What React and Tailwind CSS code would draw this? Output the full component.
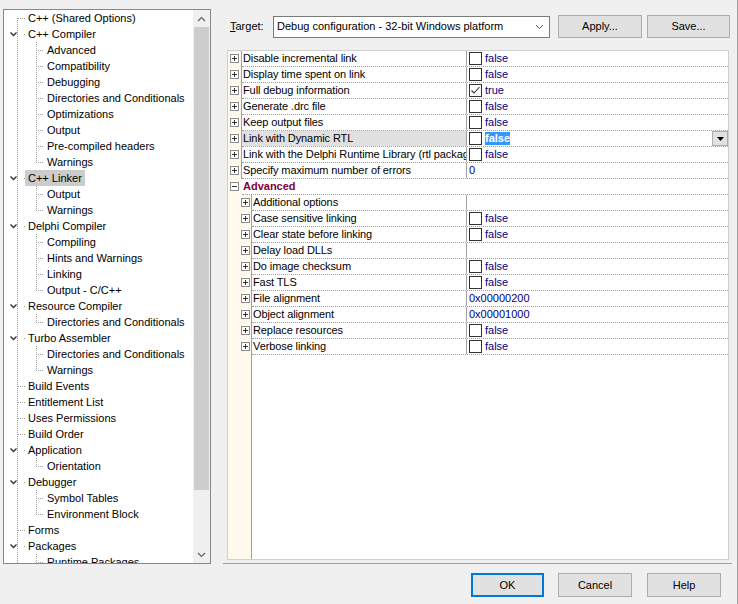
const TREE = [
  [0, "C++ (Shared Options)", "first"],
  [0, "C++ Compiler", "open"],
  [1, "Advanced", "mid"],
  [1, "Compatibility", "mid"],
  [1, "Debugging", "mid"],
  [1, "Directories and Conditionals", "mid"],
  [1, "Optimizations", "mid"],
  [1, "Output", "mid"],
  [1, "Pre-compiled headers", "mid"],
  [1, "Warnings", "last"],
  [0, "C++ Linker", "open", true],
  [1, "Output", "mid"],
  [1, "Warnings", "last"],
  [0, "Delphi Compiler", "open"],
  [1, "Compiling", "mid"],
  [1, "Hints and Warnings", "mid"],
  [1, "Linking", "mid"],
  [1, "Output - C/C++", "last"],
  [0, "Resource Compiler", "open"],
  [1, "Directories and Conditionals", "last"],
  [0, "Turbo Assembler", "open"],
  [1, "Directories and Conditionals", "mid"],
  [1, "Warnings", "last"],
  [0, "Build Events", "leaf"],
  [0, "Entitlement List", "leaf"],
  [0, "Uses Permissions", "leaf"],
  [0, "Build Order", "leaf"],
  [0, "Application", "open"],
  [1, "Orientation", "last"],
  [0, "Debugger", "open"],
  [1, "Symbol Tables", "mid"],
  [1, "Environment Block", "last"],
  [0, "Forms", "leaf"],
  [0, "Packages", "open"],
  [1, "Runtime Packages", "mid"],
];

const ROWS = [
  { name: "Disable incremental link", check: false, text: "false" },
  { name: "Display time spent on link", check: false, text: "false" },
  { name: "Full debug information", check: true, text: "true" },
  { name: "Generate .drc file", check: false, text: "false" },
  { name: "Keep output files", check: false, text: "false" },
  { name: "Link with Dynamic RTL", check: false, text: "false", selected: true },
  { name: "Link with the Delphi Runtime Library (rtl packages)", check: false, text: "false" },
  { name: "Specify maximum number of errors", text: "0" },
  { category: "Advanced" },
  { name: "Additional options", nested: true },
  { name: "Case sensitive linking", check: false, text: "false", nested: true },
  { name: "Clear state before linking", check: false, text: "false", nested: true },
  { name: "Delay load DLLs", nested: true },
  { name: "Do image checksum", check: false, text: "false", nested: true },
  { name: "Fast TLS", check: false, text: "false", nested: true },
  { name: "File alignment", text: "0x00000200", nested: true },
  { name: "Object alignment", text: "0x00001000", nested: true },
  { name: "Replace resources", check: false, text: "false", nested: true },
  { name: "Verbose linking", check: false, text: "false", nested: true },
];

const DOT = "#a0a0a0";

const Guides = ({ level, kind }) => {
  const w = level === 0 ? 21 : 40;
  return (
    <svg width={w} height="16" viewBox={`0 0 ${w} 16`} shapeRendering="crispEdges" className="shrink-0">
      <line x1="13.5" y1={kind === "first" ? 8 : 0} x2="13.5" y2="16" stroke={DOT} strokeDasharray="1 1" />
      {level === 0 && kind !== "open" && (
        <line x1="14" y1="8.5" x2="21" y2="8.5" stroke={DOT} strokeDasharray="1 1" />
      )}
      {level === 0 && kind === "open" && (
        <>
          <rect x="20" y="8" width="1" height="1" fill={DOT} />
          <path d="M6.5 6.5L9.5 9.5L12.5 6.5" fill="none" stroke="#333" strokeWidth="1.4" shapeRendering="auto" />
        </>
      )}
      {level === 1 && (
        <>
          <line x1="32.5" y1="0" x2="32.5" y2={kind === "last" ? 9 : 16} stroke={DOT} strokeDasharray="1 1" />
          <line x1="34" y1="8.5" x2="40" y2="8.5" stroke={DOT} strokeDasharray="1 1" />
        </>
      )}
    </svg>
  );
};

const Chevron = ({ up }) => (
  <svg width="9" height="6" viewBox="0 0 9 6">
    <path d={up ? "M1 5L4.5 1.5L8 5" : "M1 1L4.5 4.5L8 1"} fill="none" stroke="#606060" strokeWidth="1.2" />
  </svg>
);

const PlusBox = ({ minus }) => (
  <svg width="9" height="9" viewBox="0 0 9 9" shapeRendering="crispEdges">
    <rect x="0.5" y="0.5" width="8" height="8" fill="#fff" stroke="#8c8c8c" />
    <path d="M2 4.5h5" stroke="#333" />
    {!minus && <path d="M4.5 2v5" stroke="#333" />}
  </svg>
);

const CheckBox = ({ on }) => (
  <svg width="13" height="13" viewBox="0 0 13 13" shapeRendering="crispEdges" className="shrink-0">
    <rect x="0.5" y="0.5" width="12" height="12" fill="#fff" stroke="#333" />
    {on && (
      <path d="M2.5 6.5L5 9L10.5 3" fill="none" stroke="#333" strokeWidth="1.1" shapeRendering="auto" />
    )}
  </svg>
);

const Button = ({ children, className }) => (
  <div className={`flex items-center justify-center bg-[#e1e1e1] border border-[#adadad] ${className}`}>
    {children}
  </div>
);

const GridRow = ({ row }) => {
  if (row.category) {
    return (
      <div className="flex h-4">
        <div className="w-[14px] bg-[#fff9ee] pl-[2px] pt-[3px]">
          <PlusBox minus />
        </div>
        <div className="flex-1 border-b border-dotted border-[#a0a0a0] pl-[1px] leading-[15px] font-bold text-[#80003c]">
          {row.category}
        </div>
      </div>
    );
  }
  return (
    <div className="flex h-4">
      <div
        className={`${row.nested ? "w-[24px] pl-[13px]" : "w-[14px] pl-[2px]"} bg-[#fff9ee] pt-[3px] border-r border-[#a0a0a0] shrink-0`}
      >
        <PlusBox />
      </div>
      <div className="flex-1 flex border-b border-dotted border-[#a0a0a0]">
        <div
          className={`${row.nested ? "w-[214px]" : "w-[224px]"} ${row.selected ? "bg-[#e0e0e0]" : ""} pl-[1px] leading-[15px] tracking-[-0.1px] overflow-hidden whitespace-nowrap shrink-0`}
        >
          {row.name}
        </div>
        <div className="flex-1 flex items-center pl-[2px] border-l border-solid border-[#a0a0a0] text-[#000080]">
          {row.check !== undefined && <CheckBox on={row.check} />}
          {row.text && (
            <span
              className={`${row.check !== undefined ? "ml-[3px]" : ""} ${row.selected ? "bg-[#3399ff] text-white font-bold leading-[13px]" : "leading-[15px]"}`}
            >
              {row.text}
            </span>
          )}
          {row.selected && (
            <div className="ml-auto w-[16px] h-[15px] bg-[#e1e1e1] border border-solid border-[#adadad] flex items-center justify-center">
              <svg width="7" height="4" viewBox="0 0 7 4">
                <path d="M0 0h7L3.5 4z" fill="#000" />
              </svg>
            </div>
          )}
        </div>
      </div>
    </div>
  );
};

export default function App() {
  return (
    <div className="w-[738px] h-[604px] bg-[#f0f0f0] flex overflow-hidden text-[11px] text-black border-r border-[#a0a0a0] font-['Liberation_Sans',Arial,sans-serif]">
      <div className="pl-[3px] pt-[9px]">
        <div className="w-[208px] h-[555px] border border-[#828790] bg-white flex">
          <div className="flex-1 overflow-hidden">
            {TREE.map(([level, label, kind, sel], i) => (
              <div key={i} className="flex h-4 whitespace-nowrap">
                <Guides level={level} kind={kind} />
                <span className={`px-[3px] leading-4 ${sel ? "bg-[#cccccc]" : ""}`}>{label}</span>
              </div>
            ))}
          </div>
          <div className="w-[17px] bg-[#f0f0f0] flex flex-col">
            <div className="h-[17px] flex items-center justify-center">
              <Chevron up />
            </div>
            <div className="flex-1">
              <div className="h-[463px] mx-[1px] bg-[#cdcdcd]" />
            </div>
            <div className="h-[17px] flex items-center justify-center">
              <Chevron />
            </div>
          </div>
        </div>
      </div>

      <div className="flex-1 flex flex-col">
        <div className="flex items-center mt-[15px] h-[23px]">
          <span className="ml-[19px] w-[43px]">
            <span className="underline">T</span>arget:
          </span>
          <div className="w-[277px] h-[22px] border border-[#7a7a7a] bg-white flex items-center pl-[3px] pr-[5px]">
            <span className="flex-1 whitespace-nowrap">Debug configuration - 32-bit Windows platform</span>
            <svg width="9" height="6" viewBox="0 0 9 6">
              <path d="M1 1L4.5 4.5L8 1" fill="none" stroke="#555" />
            </svg>
          </div>
          <Button className="ml-[8px] w-[84px] h-[23px]">Apply...</Button>
          <Button className="ml-[5px] w-[83px] h-[23px]">Save...</Button>
        </div>

        <div className="ml-[16px] mt-[12px] w-[502px] h-[510px] border border-[#d0d0d0] bg-white flex flex-col">
          {ROWS.map((row, i) => (
            <GridRow key={i} row={row} />
          ))}
          <div className="flex-1 flex">
            <div className="w-[24px] bg-[#fff9ee] border-r border-[#a0a0a0]" />
          </div>
        </div>

        <div className="ml-[12px] mt-[3px] w-[509px] h-px bg-[#a0a0a0]" />

        <div className="flex mt-[9px]">
          <div className="ml-[260px] w-[73px] h-[24px] flex items-center justify-center bg-[#e1e1e1] border-2 border-[#0078d7]">
            OK
          </div>
          <Button className="ml-[14px] w-[74px] h-[24px]">Cancel</Button>
          <Button className="ml-[15px] w-[74px] h-[24px]">Help</Button>
        </div>
      </div>
    </div>
  );
}
